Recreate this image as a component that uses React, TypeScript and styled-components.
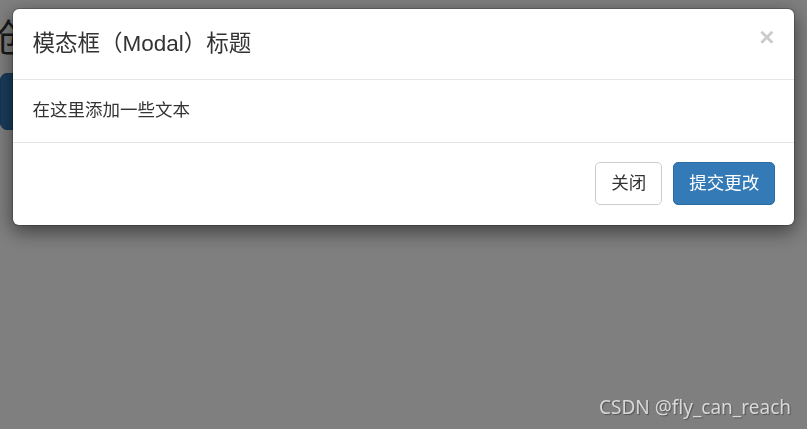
import React from "react";
import styled, { createGlobalStyle } from "styled-components";

const GlobalStyle = createGlobalStyle`
  html, body {
    margin: 0;
    padding: 0;
    background: #fff;
  }
  body {
    font-family: "Liberation Sans", "Noto Sans CJK SC", Arial, sans-serif;
    color: #333;
    overflow: hidden;
  }
`;

const PageContent = styled.div`
  padding: 12px 0 0 0;
  margin-left: -4px;
`;

const Heading = styled.h2`
  margin: 0 0 16px 0;
  font-size: 37.5px;
  font-weight: 400;
  line-height: 45px;
  color: #333;
  font-family: "Noto Sans CJK SC", sans-serif;
`;

const LaunchButton = styled.button`
  display: block;
  height: 57px;
  padding: 0 20px;
  margin-left: 4px;
  border: 1px solid #2e6da4;
  border-radius: 7px;
  background: #337ab7;
  color: #fff;
  font-size: 22px;
  font-family: inherit;
`;

const Backdrop = styled.div`
  position: fixed;
  inset: 0;
  background: rgba(0, 0, 0, 0.5);
`;

const Dialog = styled.div`
  margin: 8px 12px;
`;

const Content = styled.div`
  background: #fff;
  border: 1px solid rgba(0, 0, 0, 0.2);
  border-radius: 7px;
  box-shadow: 0 6px 19px rgba(0, 0, 0, 0.5);
  background-clip: padding-box;
`;

const Header = styled.div`
  display: flex;
  align-items: flex-start;
  justify-content: space-between;
  padding: 18.75px 19.5px;
  border-bottom: 1px solid #e5e5e5;
`;

const Title = styled.h4`
  margin: 0;
  font-size: 22.5px;
  font-weight: 400;
  line-height: 32px;
  color: #333;
`;

const CloseX = styled.button`
  margin-top: -4px;
  padding: 0;
  border: 0;
  background: transparent;
  font-size: 26px;
  font-weight: 700;
  line-height: 1;
  color: #000;
  opacity: 0.2;
  font-family: "Liberation Sans", Arial, sans-serif;
  cursor: pointer;
`;

const Body = styled.div`
  padding: 18.75px 19.5px;
  font-size: 17.5px;
  line-height: 25px;
`;

const Footer = styled.div`
  display: flex;
  justify-content: flex-end;
  gap: 11px;
  padding: 19px 18.75px 19.5px;
  border-top: 1px solid #e5e5e5;
`;

const Btn = styled.button<{ $primary?: boolean }>`
  padding: 7.75px 15px;
  font-size: 17.5px;
  line-height: 25.5px;
  border-radius: 5px;
  font-family: inherit;
  border: 1px solid ${(p) => (p.$primary ? "#2e6da4" : "#ccc")};
  background: ${(p) => (p.$primary ? "#337ab7" : "#fff")};
  color: ${(p) => (p.$primary ? "#fff" : "#333")};
`;

const Watermark = styled.div`
  position: fixed;
  right: 16px;
  bottom: 9px;
  font-family: "Noto Sans", "DejaVu Sans", sans-serif;
  font-size: 19px;
  color: #d8d8d8;
  text-shadow: 1px 1px 1px rgba(0, 0, 0, 0.35);
`;

export default function App() {
  return (
    <>
      <GlobalStyle />
      <PageContent>
        <Heading>创建模态框</Heading>
        <LaunchButton>开始演示模态框</LaunchButton>
      </PageContent>
      <Backdrop>
        <Dialog>
          <Content>
            <Header>
              <Title>模态框（Modal）标题</Title>
              <CloseX aria-label="关闭">×</CloseX>
            </Header>
            <Body>在这里添加一些文本</Body>
            <Footer>
              <Btn>关闭</Btn>
              <Btn $primary>提交更改</Btn>
            </Footer>
          </Content>
        </Dialog>
      </Backdrop>
      <Watermark>CSDN @fly_can_reach</Watermark>
    </>
  );
}
